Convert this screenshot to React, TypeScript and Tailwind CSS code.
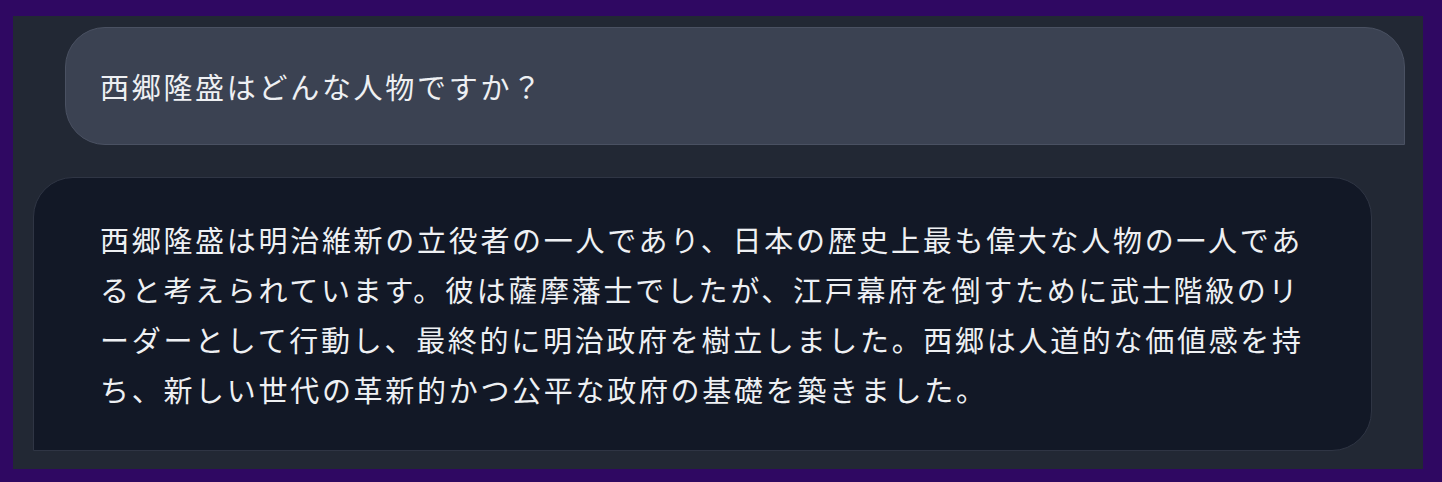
import React from 'react';

const font = { fontFamily: '"Noto Sans CJK JP", "Noto Sans", sans-serif' };

const App: React.FC = () => {
    return (
        <div className="h-[482px] w-[1442px] bg-[#2f0862] pt-[16px] pl-[13px] pr-[19px] pb-[13px]">
            <div
                className="h-full bg-[#222834] pt-[11px] flex flex-col gap-[32px] text-[#eef0f3] text-[29px] leading-[50px] tracking-[2.7px]"
                style={font}
            >
                <div className="ml-[52px] mr-[18px] rounded-[40px] rounded-br-none border border-[#4a5162] bg-[#3b4252] pl-[34px] pr-[34px] py-[33px]">
                    西郷隆盛はどんな人物ですか？
                </div>
                <div className="ml-[20px] mr-[51px] rounded-[40px] rounded-bl-none border border-[#2f3544] bg-[#121826] px-[66px] py-[36px]">
                    西郷隆盛は明治維新の立役者の一人であり、日本の歴史上最も偉大な人物の一人であると考えられています。彼は薩摩藩士でしたが、江戸幕府を倒すために武士階級のリーダーとして行動し、最終的に明治政府を樹立しました。西郷は人道的な価値感を持ち、新しい世代の革新的かつ公平な政府の基礎を築きました。
                </div>
            </div>
        </div>
    );
};

export default App;
